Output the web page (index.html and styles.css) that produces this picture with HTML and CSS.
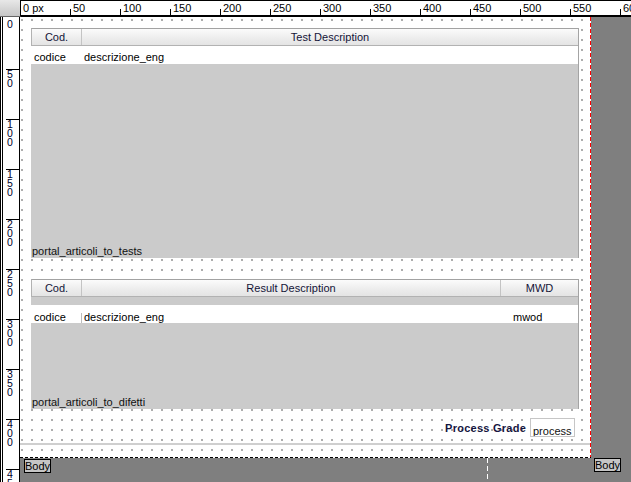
FILE: index.html
```html
<!DOCTYPE html>
<html>
<head>
<meta charset="utf-8">
<title>Layout</title>
<link rel="stylesheet" href="styles.css">
</head>
<body>
<div class="app">
  <div class="top-ruler">
    <div class="corner"></div>
    <div class="hstrip">
      <span class="hmark first">0 px</span>
      <span class="hmark">50</span>
      <span class="hmark">100</span>
      <span class="hmark">150</span>
      <span class="hmark">200</span>
      <span class="hmark">250</span>
      <span class="hmark">300</span>
      <span class="hmark">350</span>
      <span class="hmark">400</span>
      <span class="hmark">450</span>
      <span class="hmark">500</span>
      <span class="hmark">550</span>
      <span class="hmark">600</span>
    </div>
  </div>
  <div class="main">
    <div class="vruler">
      <div class="vmark first">0</div>
      <div class="vmark">5<br>0</div>
      <div class="vmark">1<br>0<br>0</div>
      <div class="vmark">1<br>5<br>0</div>
      <div class="vmark">2<br>0<br>0</div>
      <div class="vmark">2<br>5<br>0</div>
      <div class="vmark">3<br>0<br>0</div>
      <div class="vmark">3<br>5<br>0</div>
      <div class="vmark">4<br>0<br>0</div>
      <div class="vmark">4<br>5<br>0</div>
    </div>
    <div class="work">
      <div class="sheet">
        <div class="sheet-row">
          <div class="canvas">
            <div class="portal p1">
              <div class="phead">
                <div class="hc c1">Cod.</div>
                <div class="hc c2 last">Test Description</div>
              </div>
              <div class="prow r1">
                <div class="fd c1">codice</div>
                <div class="fd c2">descrizione_eng</div>
              </div>
              <div class="prest">portal_articoli_to_tests</div>
            </div>

            <div class="portal p2">
              <div class="phead">
                <div class="hc c1">Cod.</div>
                <div class="hc c2b">Result Description</div>
                <div class="hc c3 last">MWD</div>
              </div>
              <div class="pstrip"></div>
              <div class="prow r2">
                <div class="fd c1">codice</div>
                <div class="fd c2b sep">descrizione_eng</div>
                <div class="fd c3 mw">mwod</div>
              </div>
              <div class="prest">portal_articoli_to_difetti</div>
            </div>

            <div class="proc">
              <div class="proc-label">Process Grade</div>
              <div class="proc-field">process_</div>
            </div>
            <div class="hline"></div>
          </div>
          <div class="redline"></div>
        </div>
        <div class="bodyline"></div>
      </div>
      <div class="parts">
        <div class="seg1"><span class="part-tag">Body</span></div>
        <div class="seg2"></div>
        <div class="seg3"><span class="part-tag">Body</span></div>
      </div>
    </div>
  </div>
</div>
</body>
</html>
```
FILE: styles.css
```css
* { box-sizing: border-box; }
html, body { margin: 0; padding: 0; }
body {
  width: 631px;
  height: 482px;
  overflow: hidden;
  background: #7f7f7f;
  font-family: "Liberation Sans", Arial, sans-serif;
  font-size: 11px;
  color: #000;
}
.app {
  display: flex;
  flex-direction: column;
  width: 631px;
  height: 482px;
}

/* top ruler */
.top-ruler {
  display: flex;
  height: 17px;
  flex: none;
}
.corner {
  width: 21px;
  height: 17px;
  flex: none;
  background: linear-gradient(#e8e8e8, #c6c6c6);
  border-right: 1px solid #000;
  border-bottom: 1px solid #666;
}
.hstrip {
  flex: 1;
  display: flex;
  background: #fff;
  border-top: 1px solid #000;
  border-bottom: 2px solid #000;
  line-height: 14px;
  white-space: nowrap;
  overflow: hidden;
  color: #000;
}
.hmark {
  flex: none;
  width: 50px;
  padding-left: 3px;
  background: linear-gradient(#000, #000) left bottom / 1px 6px no-repeat;
}
.hmark.first {
  width: 49px;
  padding-left: 2px;
  background: none;
}

/* main area */
.main {
  display: flex;
  flex: 1;
  min-height: 0;
}
.vruler {
  width: 20px;
  flex: none;
  background: #fff;
  border-left: 3px double #000;
  border-right: 1px solid #000;
  padding-top: 2px;
  overflow: hidden;
  font-size: 10.5px;
  line-height: 9px;
  color: #00002a;
}
.vmark {
  height: 50px;
  flex: none;
  padding: 1px 0 0 4px;
  background: linear-gradient(#000, #000) 3px 0 / 13px 1px no-repeat;
}
.vmark.first { background: none; }

.work {
  flex: 1;
  display: flex;
  flex-direction: column;
  background: #7f7f7f;
  min-width: 0;
}
.sheet {
  width: 571px;
  flex: none;
}
.sheet-row {
  display: flex;
  height: 440px;
}
.canvas {
  width: 570px;
  height: 440px;
  flex: none;
  display: flex;
  flex-direction: column;
  padding-top: 11px;
  background:
    conic-gradient(at 2px 2px, transparent 75%, #adadad 0) 1px 2px / 10px 10px,
    #fff;
}
.redline {
  width: 1px;
  flex: none;
  background: repeating-linear-gradient(#f00 0 4px, #fff 4px 6px);
}
.bodyline {
  height: 1px;
  background: repeating-linear-gradient(90deg, #000 0 3px, #fff 3px 5px);
}

/* portals */
.portal {
  width: 548px;
  flex: none;
  margin-left: 11px;
  background: #fff;
  display: flex;
  flex-direction: column;
  border-right: 1px solid #a4a4a4;
}
.p1 { height: 230px; }
.p2 { height: 130px; margin-top: 21px; }

.phead {
  display: flex;
  height: 18px;
  flex: none;
  border-top: 1px solid #a2a2a2;
  border-bottom: 1px solid #b2b2b2;
  border-left: 1px solid #b2b2b2;
  padding-top: 1px;
  background: linear-gradient(#fbfbfb, #ececec 60%, #e4e4e4);
  color: #141438;
  line-height: 15px;
}
.hc {
  text-align: center;
  border-right: 1px solid #c4c4c4;
  margin-top: -1px;
  padding-top: 1px;
}
.hc.last { border-right: none; }
.c1 { width: 50px; flex: none; }
.c2 { flex: 1; }
.c2b { width: 419px; flex: none; }
.c3 { flex: 1; }

.prow {
  display: flex;
  height: 18px;
  flex: none;
  line-height: 13px;
  white-space: nowrap;
}
.r1 { padding-top: 5px; }
.r2 { padding-top: 6px; }
.fd { padding-left: 3px; }
.fd.sep {
  background: linear-gradient(#bcbcbc, #bcbcbc) 0 2px / 1px 10px no-repeat;
}
.fd.mw { padding-left: 13px; }

.pstrip {
  height: 8px;
  flex: none;
  background: #cbcbcb;
}
.prest {
  flex: 1;
  background: #cbcbcb;
  display: flex;
  flex-direction: column;
  justify-content: flex-end;
  padding-left: 1px;
  line-height: 13px;
  white-space: nowrap;
  color: #111;
}

/* process grade */
.proc {
  display: flex;
  justify-content: flex-end;
  align-items: flex-end;
  gap: 4px;
  margin-top: 9px;
  padding-right: 15px;
  flex: none;
}
.proc-label {
  font-weight: bold;
  color: #16163f;
  line-height: 13px;
  margin-bottom: 2px;
  letter-spacing: 0.25px;
}
.proc-field {
  width: 45px;
  height: 19px;
  background: #fff;
  border: 1px solid #c6c6c6;
  overflow: hidden;
  padding: 6px 0 0 2px;
  line-height: 13px;
  white-space: nowrap;
  color: #111;
}
.hline {
  height: 2px;
  flex: none;
  margin-top: 6px;
  background: #cfcfcf;
}

/* part labels */
.parts {
  display: flex;
  height: 25px;
  flex: none;
}
.seg1 {
  width: 467px;
  flex: none;
  padding: 1px 0 0 4px;
}
.seg2 {
  width: 104px;
  flex: none;
  background: repeating-linear-gradient(#fff 0 5px, transparent 5px 8px) 0 0 / 1px 100% no-repeat;
}
.seg3 {
  flex: 1;
  padding-left: 3px;
}
.part-tag {
  display: inline-block;
  height: 14px;
  border: 1px solid #000;
  background: #c6c6c6;
  line-height: 12px;
  padding: 0;
  color: #000;
}
```
